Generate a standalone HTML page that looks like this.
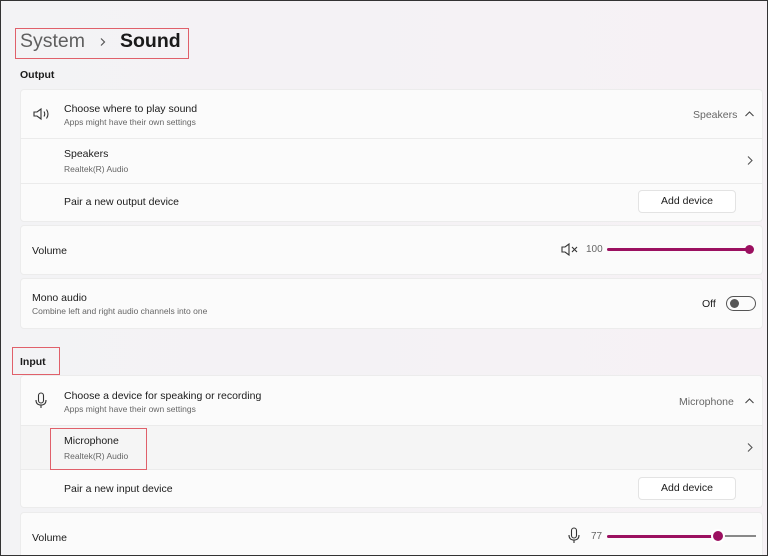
<!DOCTYPE html>
<html style="overflow:hidden"><head><style>
*{margin:0;padding:0;box-sizing:border-box}
html,body{width:768px;height:556px;overflow:hidden}
body{background:linear-gradient(90deg,#f3f3f5,#f6f1f5);font-family:"Liberation Sans",sans-serif;color:#1b1b1b;position:relative}
.frame{position:absolute;left:0;top:0;width:768px;height:556px;border:1px solid #333;z-index:10;pointer-events:none}
.a{position:absolute}
.card{position:absolute;left:20px;width:743px;background:#fbfbfb;border-radius:4px;border:1px solid #ececec}
.t{font-size:10.5px;color:#1b1b1b}
.s{font-size:8.5px;color:#666}
.line{position:absolute;left:20px;width:743px;height:1px;background:#ebebeb}
.btn{position:absolute;left:638px;width:98px;height:23px;background:#fff;border:1px solid #e3e3e3;border-radius:4px;font-size:10.5px;text-align:center;line-height:21px}
.red{position:absolute;border:1.5px solid #e0606a;z-index:5}
</style></head><body>
<div class="frame"></div>
<div class="red" style="left:15px;top:28px;width:174px;height:31px"></div>
<div class="a" style="left:20px;top:30px;font-size:19.5px;color:#5f5f5f">System</div>
<svg class="a" style="left:99px;top:37px" width="8" height="10" viewBox="0 0 8 10" fill="none" stroke="#555" stroke-width="1.2"><path d="M2 1.5l3.5 3.5L2 8.5"/></svg>
<div class="a" style="left:120px;top:30px;font-size:19.5px;font-weight:bold;color:#1a1a1a">Sound</div>
<div class="a" style="left:20px;top:69px;font-size:10.5px;font-weight:bold">Output</div>

<div class="card" style="top:89px;height:133px"></div>
<div class="line" style="top:138px"></div><div class="line" style="top:183px"></div>
<svg class="a" style="left:33px;top:107px" width="18" height="14" viewBox="0 0 18 14" fill="none" stroke="#333" stroke-width="1.1"><path d="M1 5h3l4-3v10l-4-3H1z"/><path d="M11 4.5q1.5 2.5 0 5M13.5 2.5q3 4.5 0 9"/></svg>
<div class="a t" style="left:64px;top:103px">Choose where to play sound</div>
<div class="a s" style="left:64px;top:117px">Apps might have their own settings</div>
<div class="a" style="left:693px;top:109px;font-size:10.5px;color:#666">Speakers</div>
<svg class="a" style="left:744px;top:110px" width="11" height="8" viewBox="0 0 11 8" fill="none" stroke="#444" stroke-width="1.1"><path d="M1.5 6l4-4 4 4"/></svg>
<div class="a t" style="left:64px;top:148px">Speakers</div>
<div class="a s" style="left:64px;top:164px">Realtek(R) Audio</div>
<svg class="a" style="left:746px;top:155px" width="8" height="11" viewBox="0 0 8 11" fill="none" stroke="#555" stroke-width="1.1"><path d="M2 1.5l4 4-4 4"/></svg>
<div class="a t" style="left:64px;top:196px">Pair a new output device</div>
<div class="btn" style="top:190px">Add device</div>

<div class="card" style="top:225px;height:50px"></div>
<div class="a t" style="left:32px;top:245px">Volume</div>
<svg class="a" style="left:561px;top:243px" width="18" height="13" viewBox="0 0 18 13" fill="none" stroke="#333" stroke-width="1.1"><path d="M1 4h3l4-3v11l-4-3H1z"/><path d="M11 4l5 5M16 4l-5 5"/></svg>
<div class="a" style="left:586px;top:244px;font-size:10px;color:#666">100</div>
<div class="a" style="left:607px;top:248px;width:140px;height:3px;background:#9b1060;border-radius:2px"></div>
<div class="a" style="left:745px;top:245px;width:9px;height:9px;background:#9b1060;border-radius:50%"></div>

<div class="card" style="top:278px;height:51px"></div>
<div class="a t" style="left:32px;top:292px">Mono audio</div>
<div class="a s" style="left:32px;top:306px">Combine left and right audio channels into one</div>
<div class="a" style="left:702px;top:298px;font-size:10.5px">Off</div>
<div class="a" style="left:726px;top:296px;width:30px;height:15px;border:1px solid #555;border-radius:8px"></div>
<div class="a" style="left:730px;top:299px;width:9px;height:9px;background:#555;border-radius:50%"></div>

<div class="red" style="left:12px;top:347px;width:48px;height:28px"></div>
<div class="a" style="left:20px;top:356px;font-size:10.5px;font-weight:bold">Input</div>

<div class="card" style="top:375px;height:133px"></div>
<div class="a" style="left:21px;top:425px;width:741px;height:44px;background:#f5f5f5"></div>
<div class="line" style="top:425px"></div><div class="line" style="top:469px"></div>
<svg class="a" style="left:35px;top:392px" width="12" height="18" viewBox="0 0 12 18" fill="none" stroke="#333" stroke-width="1.1"><rect x="3.5" y="1" width="5" height="10" rx="2.5"/><path d="M1 8q0 5 5 5t5-5M6 13v3"/></svg>
<div class="a t" style="left:64px;top:390px">Choose a device for speaking or recording</div>
<div class="a s" style="left:64px;top:404px">Apps might have their own settings</div>
<div class="a" style="left:679px;top:396px;font-size:10.5px;color:#666">Microphone</div>
<svg class="a" style="left:744px;top:397px" width="11" height="8" viewBox="0 0 11 8" fill="none" stroke="#444" stroke-width="1.1"><path d="M1.5 6l4-4 4 4"/></svg>
<div class="red" style="left:50px;top:428px;width:97px;height:42px"></div>
<div class="a t" style="left:64px;top:435px">Microphone</div>
<div class="a s" style="left:64px;top:451px">Realtek(R) Audio</div>
<svg class="a" style="left:746px;top:442px" width="8" height="11" viewBox="0 0 8 11" fill="none" stroke="#555" stroke-width="1.1"><path d="M2 1.5l4 4-4 4"/></svg>
<div class="a t" style="left:64px;top:483px">Pair a new input device</div>
<div class="btn" style="top:477px">Add device</div>

<div class="card" style="top:512px;height:50px"></div>
<div class="a t" style="left:32px;top:532px">Volume</div>
<svg class="a" style="left:568px;top:527px" width="12" height="18" viewBox="0 0 12 18" fill="none" stroke="#333" stroke-width="1.1"><rect x="3.5" y="1" width="5" height="10" rx="2.5"/><path d="M1 8q0 5 5 5t5-5M6 13v3"/></svg>
<div class="a" style="left:591px;top:531px;font-size:10px;color:#666">77</div>
<div class="a" style="left:607px;top:535px;width:110px;height:3px;background:#9b1060;border-radius:2px"></div>
<div class="a" style="left:717px;top:535px;width:39px;height:2px;background:#888"></div>
<div class="a" style="left:713px;top:531px;width:10px;height:10px;background:#9b1060;border-radius:50%;box-shadow:0 0 0 2px #fff"></div>
</body></html>
